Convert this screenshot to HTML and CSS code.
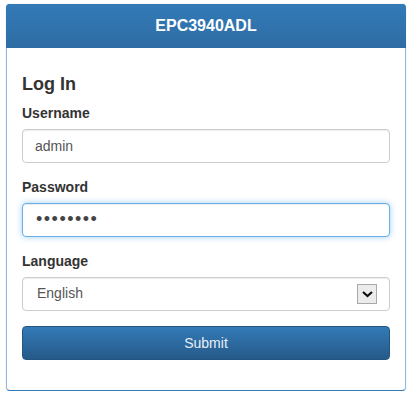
FILE: index.html
```html
<!DOCTYPE html>
<html>
<head>
<meta charset="utf-8">
<title>EPC3940ADL</title>
<link rel="stylesheet" href="styles.css">
</head>
<body>
<div class="panel">
  <div class="panel-heading">EPC3940ADL</div>
  <div class="panel-body">
    <h4 class="title">Log In</h4>
    <div class="form-group">
      <label class="label">Username</label>
      <input class="form-control" type="text" value="admin">
    </div>
    <div class="form-group">
      <label class="label">Password</label>
      <input class="form-control is-focus" type="password" value="12345678">
    </div>
    <div class="form-group">
      <label class="label">Language</label>
      <div class="form-control select">
        <span>English</span>
        <span class="select-btn">
          <svg width="13" height="10" viewBox="0 0 13 10"><path d="M2 3 L6.5 7 L11 3" fill="none" stroke="#111" stroke-width="2.2"/></svg>
        </span>
      </div>
    </div>
    <button class="btn" type="button">Submit</button>
  </div>
</div>
</body>
</html>
```
FILE: styles.css
```css
* { box-sizing: border-box; }
html, body { margin: 0; background: #fff; }
body {
  padding: 4px 10px 0 6px;
  font-family: "Liberation Sans", Arial, sans-serif;
  font-size: 14px;
  line-height: 1.42857;
  color: #333;
}
.panel {
  width: 400px;
  border: 1px solid #337ab7;
  border-left-color: #8fb9e2;
  border-right-color: #8fb9e2;
  border-radius: 4px;
  box-shadow: 0 0 1px rgba(51,122,183,.5);
  background: #fff;
}
.panel-heading {
  margin: -1px -1px 0;
  height: 44px;
  display: flex;
  align-items: center;
  justify-content: center;
  background: linear-gradient(to bottom, #337ab7 0, #2e6da4 100%);
  color: #fff;
  font-size: 16px;
  font-weight: bold;
  border-radius: 4px 4px 0 0;
}
.panel-body { padding: 16px 15px 30px; }
.title {
  margin: 10px 0 10px;
  font-size: 18px;
  line-height: 20px;
  font-weight: bold;
}
.form-group { margin-bottom: 15px; }
.label {
  display: block;
  margin-bottom: 5px;
  font-weight: bold;
}
.form-control {
  display: block;
  width: 100%;
  height: 34px;
  padding: 6px 12px;
  font-family: inherit;
  font-size: 14px;
  line-height: 1.42857;
  color: #555;
  background: #fff;
  border: 1px solid #ccc;
  border-radius: 4px;
  box-shadow: inset 0 1px 1px rgba(0,0,0,.075);
  outline: none;
}
.is-focus {
  border-color: #66afe9;
  box-shadow: inset 0 1px 1px rgba(0,0,0,.075), 0 0 6px rgba(102,175,233,.6);
  font-size: 18px;
  letter-spacing: 1.5px;
  padding-left: 13px;
  color: #444;
}
.select {
  display: flex;
  align-items: center;
  padding-left: 14px;
  padding-right: 12px;
}
.select-btn {
  margin-left: auto;
  width: 20px;
  height: 20px;
  display: flex;
  align-items: center;
  justify-content: center;
  background: #ececec;
  border: 1px solid #a9a9a9;
}
.btn {
  display: block;
  width: 100%;
  height: 34px;
  font-family: inherit;
  font-size: 14px;
  color: #e8f0f8;
  background: linear-gradient(to bottom, #337ab7 0, #265a88 100%);
  border: 1px solid #245580;
  border-radius: 4px;
  cursor: pointer;
}
```
